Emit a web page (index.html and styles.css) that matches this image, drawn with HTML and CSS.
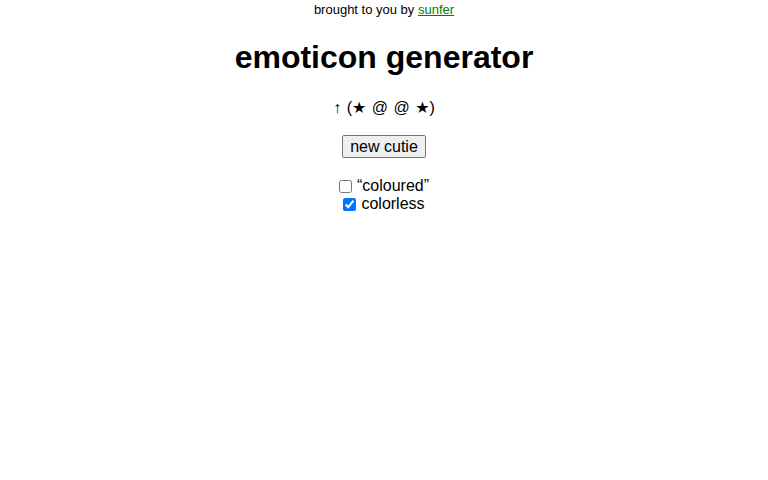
FILE: index.html
```html
<!DOCTYPE html>
<html>
<head>
<meta charset="utf-8">
<link rel="stylesheet" href="styles.css">
</head>
<body>
<div class="page">
  <p class="credit">brought to you by <a href="#">sunfer</a></p>
  <h1 class="title">emoticon generator</h1>
  <p class="face">↑ (★ @ @ ★)</p>
  <button class="btn">new cutie</button>
  <div class="opts">
    <label class="opt"><input type="checkbox">“coloured”</label>
    <label class="opt"><input type="checkbox" checked>colorless</label>
  </div>
</div>
</body>
</html>
```
FILE: styles.css
```css
html, body {
  margin: 0;
  padding: 0;
  background: #fff;
}
body {
  font-family: "Liberation Sans", Arial, sans-serif;
  color: #000;
}
.page {
  display: flex;
  flex-direction: column;
  align-items: center;
  padding-top: 2px;
}
.credit {
  font-size: 13px;
  line-height: 15px;
  margin: 0;
}
.credit a {
  color: #008000;
}
.title {
  font-size: 32px;
  line-height: 37px;
  font-weight: bold;
  margin: 22px 0 0;
}
.face {
  font-family: "Liberation Sans", "DejaVu Sans", sans-serif;
  font-size: 16px;
  line-height: 18px;
  word-spacing: 1px;
  margin: 23px 0 0;
}
.btn {
  margin-top: 18px;
  font-family: "Liberation Sans", Arial, sans-serif;
  font-size: 16px;
  line-height: 17px;
  padding: 2px 7px;
  height: 23px;
  border: 1px solid #767676;
  border-radius: 2px;
  background: #efefef;
  color: #000;
}
.opts {
  margin-top: 19px;
  display: flex;
  flex-direction: column;
  align-items: center;
}
.opt {
  font-size: 16px;
  line-height: 18px;
  display: flex;
  align-items: center;
  gap: 5px;
  padding: 0 4px;
}
.opt input {
  margin: 0;
  width: 13px;
  height: 13px;
}
```
